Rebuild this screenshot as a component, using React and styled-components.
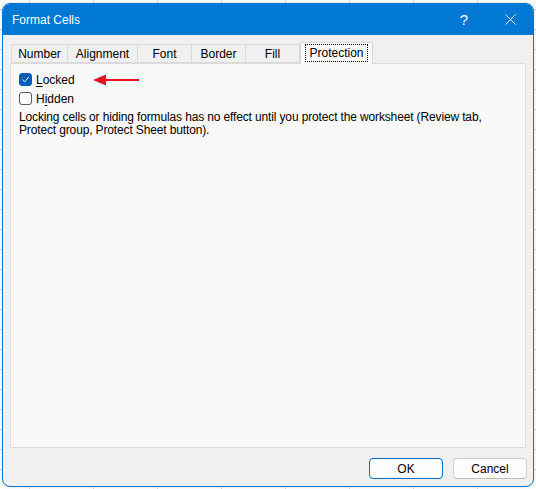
import React from "react";
import styled, { createGlobalStyle } from "styled-components";

const GlobalStyle = createGlobalStyle`
  html, body {
    margin: 0;
    padding: 0;
  }
  body {
    width: 536px;
    height: 489px;
    overflow: hidden;
    font-family: "Liberation Sans", Arial, sans-serif;
    background-color: #fff;
    background-image:
      linear-gradient(to right, #d4d4d4 1px, transparent 1px),
      linear-gradient(to bottom, #d4d4d4 1px, transparent 1px);
    background-size: 64px 20px;
    background-position: 29px 0, 0 9px;
  }
`;

const Window = styled.div`
  box-sizing: border-box;
  margin: 3px 0 0 2px;
  width: 532px;
  height: 484px;
  display: flex;
  flex-direction: column;
  background: #f0f0f0;
  border: 1px solid #0078d4;
  border-radius: 8px;
  overflow: hidden;
  box-shadow: 0 0 3px rgba(0, 0, 0, 0.15);
`;

const TitleBar = styled.div`
  height: 31px;
  flex: none;
  display: flex;
  align-items: center;
  background: #0078d4;
  color: #fff;
  padding-left: 9px;
`;

const Title = styled.div`
  flex: 1;
  font-size: 12px;
  padding-top: 1px;
`;

const TitleButton = styled.div`
  width: 46px;
  height: 31px;
  display: flex;
  align-items: center;
  justify-content: center;
  font-size: ${(p) => p.size || 13}px;
`;

const Body = styled.div`
  flex: 1;
  display: flex;
  flex-direction: column;
  padding: 7px 7px 0 7px;
`;

const TabStrip = styled.div`
  display: flex;
  align-items: flex-end;
  height: 21px;
  padding-left: 1px;
  position: relative;
  z-index: 1;
`;

const Tab = styled.div`
  box-sizing: border-box;
  width: ${(p) => p.w}px;
  height: ${(p) => (p.active ? 22 : 19)}px;
  margin-bottom: ${(p) => (p.active ? -1 : 0)}px;
  display: flex;
  align-items: center;
  justify-content: center;
  font-size: 12px;
  color: #000;
  background: ${(p) => (p.active ? "#f9f9f9" : "#f0f0f0")};
  border: 1px solid #d9d9d9;
  border-bottom: ${(p) => (p.active ? "none" : "1px solid #d9d9d9")};
  border-left: ${(p) => (p.first || p.active ? "1px solid #d9d9d9" : "none")};
  padding-bottom: ${(p) => (p.active ? 2 : 0)}px;
`;

const FocusLabel = styled.span`
  outline: 1px dotted #000;
  outline-offset: 0;
  padding: 1px 3px;
`;

const Panel = styled.div`
  box-sizing: border-box;
  height: 385px;
  background: #f9f9f9;
  border: 1px solid #dcdcdc;
  padding: 6px 8px 0 8px;
`;

const CheckRow = styled.div`
  display: flex;
  align-items: center;
  height: 19px;
  font-size: 12px;
  color: #000;
`;

const Box = styled.div`
  box-sizing: border-box;
  width: 13px;
  height: 13px;
  border-radius: 3px;
  margin-right: 4px;
  display: flex;
  align-items: center;
  justify-content: center;
  background: ${(p) => (p.checked ? "#005fb8" : "#fdfdfd")};
  border: 1px solid ${(p) => (p.checked ? "#005fb8" : "#5a5a5a")};
`;

const Key = styled.span`
  text-decoration: underline;
  text-underline-offset: 2px;
`;

const Arrow = styled.svg`
  margin-left: 18px;
  flex: none;
`;

const Note = styled.p`
  margin: 3px 0 0 0;
  font-size: 12px;
  line-height: 13px;
  letter-spacing: -0.14px;
  color: #000;
`;

const Footer = styled.div`
  flex: 1;
  display: flex;
  justify-content: flex-end;
  align-items: flex-start;
  gap: 10px;
  padding: 10px 0 0 0;
  margin-right: -1px;
`;

const Button = styled.button`
  box-sizing: border-box;
  width: 74px;
  height: 21px;
  border-radius: 4px;
  font-family: inherit;
  font-size: 12px;
  color: #000;
  background: #fdfdfd;
  border: 1px solid ${(p) => (p.primary ? "#0067c0" : "#d0d0d0")};
  border-bottom-color: ${(p) => (p.primary ? "#0067c0" : "#bcbcbc")};
  padding: 0;
`;

const tabs = [
  { label: "Number", w: 57 },
  { label: "Alignment", w: 70 },
  { label: "Font", w: 54 },
  { label: "Border", w: 54 },
  { label: "Fill", w: 54 },
  { label: "Protection", w: 73, active: true },
];

const App = () => (
  <>
    <GlobalStyle />
    <Window>
      <TitleBar>
        <Title>Format Cells</Title>
        <TitleButton size={15}>?</TitleButton>
        <TitleButton>
          <svg width="11" height="11" viewBox="0 0 11 11">
            <path d="M0.5 0.5 L10.5 10.5 M10.5 0.5 L0.5 10.5" stroke="#fff" strokeWidth="1" />
          </svg>
        </TitleButton>
      </TitleBar>
      <Body>
        <TabStrip>
          {tabs.map((t, i) => (
            <Tab key={t.label} w={t.w} active={t.active} first={i === 0}>
              {t.active ? <FocusLabel>{t.label}</FocusLabel> : t.label}
            </Tab>
          ))}
        </TabStrip>
        <Panel>
          <CheckRow>
            <Box checked>
              <svg width="9" height="9" viewBox="0 0 9 9">
                <path d="M1.5 4.8 L3.6 6.8 L7.6 2.2" fill="none" stroke="#fff" strokeWidth="1" />
              </svg>
            </Box>
            <span>
              <Key>L</Key>ocked
            </span>
            <Arrow width="46" height="12" viewBox="0 0 46 12">
              <path d="M0 6 L13 0.5 L13 11.5 Z" fill="#e81123" />
              <rect x="12" y="5" width="34" height="2" fill="#e81123" />
            </Arrow>
          </CheckRow>
          <CheckRow>
            <Box />
            <span>
              H<Key>i</Key>dden
            </span>
          </CheckRow>
          <Note>
            Locking cells or hiding formulas has no effect until you protect the worksheet (Review tab,
            Protect group, Protect Sheet button).
          </Note>
        </Panel>
        <Footer>
          <Button primary>OK</Button>
          <Button>Cancel</Button>
        </Footer>
      </Body>
    </Window>
  </>
);

export default App;
